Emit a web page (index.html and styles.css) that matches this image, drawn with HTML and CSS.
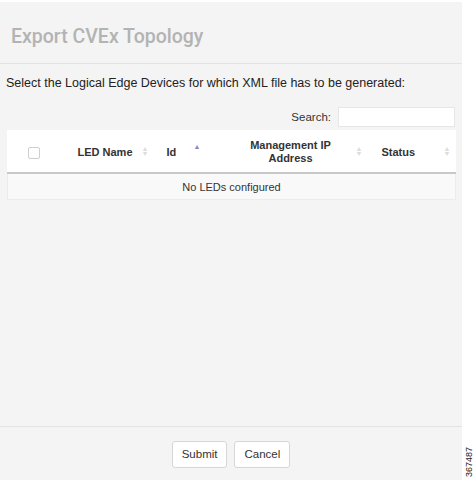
FILE: index.html
```html
<!DOCTYPE html>
<html lang="en">
<head>
    <meta charset="UTF-8">
    <title>Export CVEx Topology</title>
    <link rel="stylesheet" href="styles.css">
</head>
<body>
    <div class="page">
        <div class="modal">
            <div class="modal-header">
                <h2>Export CVEx Topology</h2>
            </div>
            <div class="modal-body">
                <p class="intro">Select the Logical Edge Devices for which XML file has to be generated:</p>
                <div class="search-row">
                    <label for="search">Search:</label>
                    <input type="text" id="search">
                </div>
                <table class="led-table">
                    <colgroup>
                        <col class="w-check">
                        <col class="w-name">
                        <col class="w-id">
                        <col class="w-ip">
                        <col class="w-status">
                    </colgroup>
                    <thead>
                        <tr>
                            <th class="col-check"><span class="checkbox"></span></th>
                            <th class="col-name sortable">LED Name</th>
                            <th class="col-id sorted-asc">Id</th>
                            <th class="col-ip sortable">Management IP<br>Address</th>
                            <th class="col-status sortable">Status</th>
                        </tr>
                    </thead>
                    <tbody>
                        <tr class="empty-row">
                            <td colspan="5">No LEDs configured</td>
                        </tr>
                    </tbody>
                </table>
            </div>
            <div class="modal-footer">
                <button>Submit</button>
                <button>Cancel</button>
            </div>
        </div>
        <div class="figure-id">367487</div>
    </div>
</body>
</html>
```

FILE: styles.css
```css
body {
    margin: 0;
    font-family: 'Liberation Sans', Arial, sans-serif;
    background: #fff;
    color: #333;
}

.page {
    display: flex;
    align-items: flex-end;
}

.modal {
    width: 462px;
    height: 478px;
    margin-top: 2px;
    background: #f4f4f4;
    display: flex;
    flex-direction: column;
}

.modal-header {
    height: 61px;
    border-bottom: 1px solid #e3e3e3;
    display: flex;
    align-items: center;
    padding-left: 11px;
}

.modal-header h2 {
    margin: 0;
    font-family: Roboto, 'Liberation Sans', sans-serif;
    font-size: 19.5px;
    font-weight: 500;
    color: #b3b3b3;
    position: relative;
    top: 4px;
}

.modal-body {
    flex: 1;
    padding: 12px 7px 0 7px;
}

.intro {
    margin: 0 0 0 -1px;
    font-size: 12.5px;
    color: #222;
}

.search-row {
    display: flex;
    justify-content: flex-end;
    align-items: center;
    gap: 7px;
    margin-top: 17px;
    margin-bottom: 3px;
}

.search-row label {
    font-size: 11.5px;
    color: #333;
}

.search-row input {
    width: 117px;
    height: 20px;
    box-sizing: border-box;
    border: 1px solid #e6e6e6;
    background: #fff;
}

.led-table {
    width: 448px;
    table-layout: fixed;
    border-collapse: collapse;
    background: #fff;
    font-size: 11px;
}

.w-check { width: 53px; }
.w-name { width: 95px; }
.w-id { width: 55px; }
.w-ip { width: 160px; }
.w-status { width: 85px; }

.led-table th {
    height: 40px;
    padding: 2px 0 0 0;
    font-weight: bold;
    color: #333;
    text-align: left;
    border-bottom: 2px solid #c8c8c8;
    position: relative;
    line-height: 13px;
}

.col-check { text-align: center !important; }
.col-name { padding-left: 17px !important; }
.col-id { padding-left: 11px !important; }
.col-ip { text-align: center !important; }
.col-status { padding-left: 11px !important; }

.checkbox {
    display: inline-block;
    width: 10px;
    height: 10px;
    border: 1px solid #cfcfcf;
    border-radius: 2px;
    background: #fff;
    vertical-align: middle;
}

.sortable::after,
.sorted-asc::after {
    position: absolute;
    top: 50%;
    transform: translateY(-50%);
    font-size: 7px;
    line-height: 5px;
    color: #dcdcdc;
    white-space: pre;
    content: "\25B2\A\25BC";
}

.col-name::after { right: 7px; }
.col-ip::after { right: 8px; }
.col-status::after { right: 5px; }

.sorted-asc::after {
    content: "\25B2";
    color: #8a86c4;
    top: 16px;
    right: 10px;
}

.empty-row td {
    height: 25px;
    padding: 0;
    background: #f9f9f9;
    text-align: center;
    border: 1px solid #ececec;
    border-top: none;
    color: #333;
}

.modal-footer {
    height: 52px;
    border-top: 1px solid #e3e3e3;
    display: flex;
    justify-content: center;
    align-items: center;
    gap: 7px;
    padding-top: 1px;
}

.modal-footer button {
    font-family: 'Liberation Sans', Arial, sans-serif;
    font-size: 11.5px;
    color: #333;
    background: #fff;
    border: 1px solid #d6d6d6;
    border-radius: 3px;
    height: 27px;
    padding: 0 9px;
}

.figure-id {
    writing-mode: vertical-rl;
    transform: rotate(180deg);
    font-size: 9px;
    line-height: 9px;
    color: #222;
    margin-left: 3px;
    margin-bottom: 3px;
}
```
